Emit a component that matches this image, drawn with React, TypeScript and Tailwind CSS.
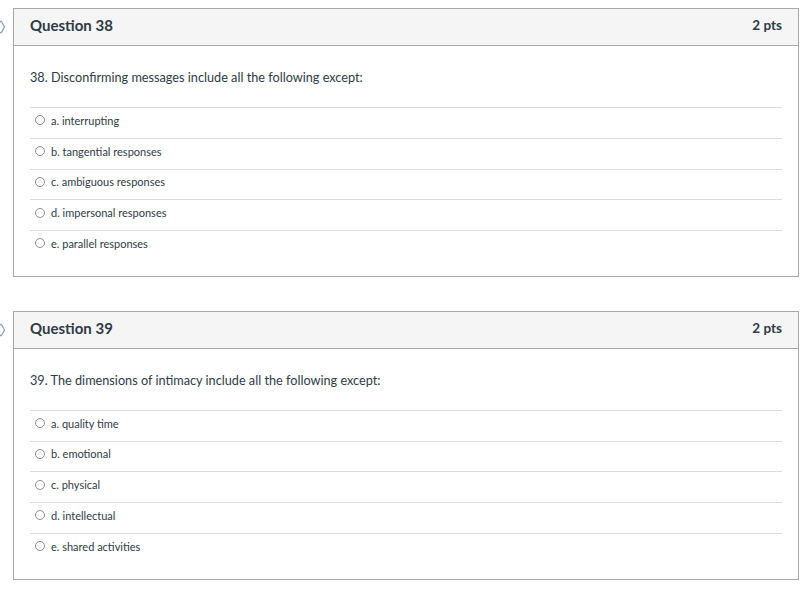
import React from "react";

type Q = { title: string; text: string; options: string[] };

const questions: Q[] = [
  {
    title: "Question 38",
    text: "38. Disconfirming messages include all the following except:",
    options: [
      "a. interrupting",
      "b. tangential responses",
      "c. ambiguous responses",
      "d. impersonal responses",
      "e. parallel responses",
    ],
  },
  {
    title: "Question 39",
    text: "39. The dimensions of intimacy include all the following except:",
    options: [
      "a. quality time",
      "b. emotional",
      "c. physical",
      "d. intellectual",
      "e. shared activities",
    ],
  },
];

function FlagIcon() {
  return (
    <svg width="13" height="14" viewBox="0 0 13 14" className="block">
      <path
        d="M-6 1.5 H1.5 L4.5 7 L1.5 12.5 H-6"
        fill="none"
        stroke="#8aa3b8"
        strokeWidth="1.3"
        strokeLinejoin="round"
      />
    </svg>
  );
}

function QuestionCard({ q }: { q: Q }) {
  return (
    <div className="flex">
      <div className="w-[13px] shrink-0 pt-[12px] overflow-hidden">
        <FlagIcon />
      </div>
      <div className="w-[786px] border border-[#a8a8a8] bg-white">
        <div className="h-[37px] bg-[#f5f5f5] border-b border-[#a8a8a8] flex items-center justify-between px-[16px] pb-[3px]">
          <span className="text-[15px] font-bold text-[#2d3b45]">{q.title}</span>
          <span className="text-[13.5px] font-bold text-[#2d3b45]">2 pts</span>
        </div>
        <div className="px-[16px] pt-[22px] pb-[15px]">
          <div className="text-[12.7px] leading-[19px] text-[#2d3b45] mb-[20px]">{q.text}</div>
          <div>
            {q.options.map((o) => (
              <div
                key={o}
                className="h-[30.75px] border-t border-[#dcdcdc] flex items-center pl-[5px] pb-[5px]"
              >
                <span className="w-[10px] h-[10px] rounded-full border border-[#8b8b8b] bg-white shrink-0" />
                <span className="ml-[6px] text-[11px] text-[#2d3b45] leading-none">{o}</span>
              </div>
            ))}
          </div>
        </div>
      </div>
    </div>
  );
}

export default function App() {
  return (
    <div
      className="w-[805px] h-[606px] bg-white pt-[8px]"
      style={{ fontFamily: "Lato, 'Liberation Sans', sans-serif" }}
    >
      <div className="flex flex-col gap-[34px]">
        {questions.map((q) => (
          <QuestionCard key={q.title} q={q} />
        ))}
      </div>
    </div>
  );
}
